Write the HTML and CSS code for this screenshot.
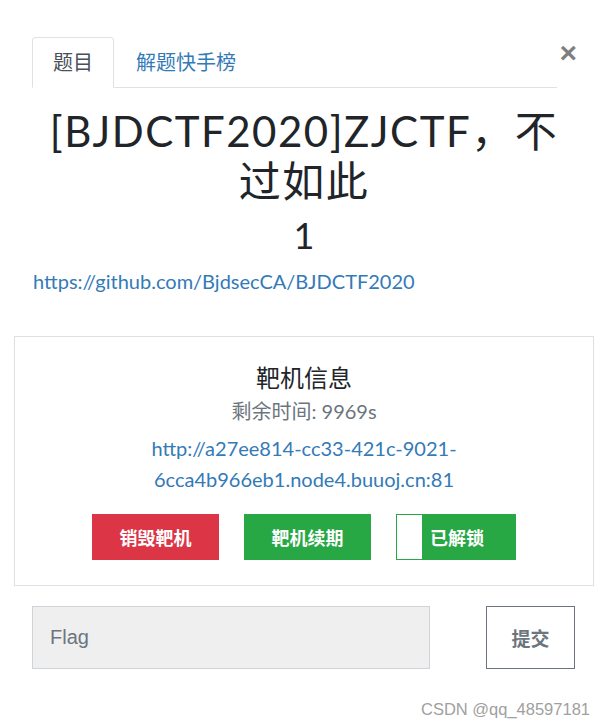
FILE: index.html
```html
<!DOCTYPE html>
<html lang="zh">
<head>
<meta charset="utf-8">
<title>题目</title>
<link rel="stylesheet" href="styles.css">
</head>
<body>
<div class="modal">
  <div class="tabs-row">
    <ul class="tabs">
      <li class="tab active">题目</li>
      <li class="tab">解题快手榜</li>
    </ul>
    <button class="close" type="button">×</button>
  </div>

  <div class="challenge">
    <h1 class="title">[BJDCTF2020]ZJCTF，不过如此</h1>
    <h2 class="value">1</h2>
    <p class="desc"><a href="#">https://github.com/BjdsecCA/BJDCTF2020</a></p>
  </div>

  <div class="card">
    <h3 class="card-title">靶机信息</h3>
    <p class="remain">剩余时间: 9969s</p>
    <p class="target"><a href="#">http://a27ee814-cc33-421c-9021-6cca4b966eb1.node4.buuoj.cn:81</a></p>
    <div class="actions">
      <button class="btn btn-red" type="button">销毁靶机</button>
      <button class="btn btn-green" type="button">靶机续期</button>
      <button class="btn btn-toggle" type="button"><span class="knob"></span><span class="toggle-label">已解锁</span></button>
    </div>
  </div>

  <form class="submit-row">
    <input class="flag-input" type="text" placeholder="Flag">
    <button class="submit" type="button">提交</button>
  </form>

  <div class="watermark">CSDN @qq_48597181</div>
</div>
</body>
</html>
```

FILE: styles.css
```css
* { box-sizing: border-box; }

html, body {
  margin: 0;
  padding: 0;
  background: #fff;
}

body {
  font-family: Lato, "Noto Sans CJK SC", sans-serif;
  color: #212529;
  width: 604px;
  height: 727px;
  overflow: hidden;
}

.modal {
  padding-top: 37px;
}

.tabs-row {
  display: flex;
  align-items: flex-start;
  padding-left: 32px;
  padding-right: 27px;
}

.tabs {
  flex: 1;
  display: flex;
  list-style: none;
  margin: 0;
  padding: 0;
  border-bottom: 1px solid #dee2e6;
}

.tab {
  font-size: 20px;
  line-height: 24px;
  padding: 12px 20px 13px;
  border: 1px solid transparent;
  border-radius: 4px 4px 0 0;
  margin-bottom: -1px;
  color: #337ab7;
  margin-right: 1px;
}

.tab.active {
  color: #495057;
  border-color: #dee2e6 #dee2e6 #fff;
  background: #fff;
}

.close {
  width: 20px;
  margin-left: 0;
  margin-top: 0;
  padding: 0;
  border: 0;
  background: none;
  font-family: "Liberation Sans", Arial, sans-serif;
  font-size: 30px;
  line-height: 32px;
  font-weight: 700;
  color: #000;
  opacity: 0.5;
  text-align: right;
}

.challenge {
  padding: 0 40px 0 44px;
  text-align: center;
}

.title {
  margin: 18px 0 0;
  font-size: 42px;
  font-weight: 400;
  line-height: 1.2;
  letter-spacing: 1.5px;
  color: #212529;
}

.value {
  margin: 7px 0 0;
  font-size: 36px;
  font-weight: 400;
  line-height: 1.2;
}

.desc {
  margin: 9px 0 0;
  text-align: left;
  padding-left: 0;
  margin-left: -11px;
  font-size: 20px;
  line-height: 30px;
}

a {
  color: #337ab7;
  text-decoration: none;
}

.card {
  margin: 40px 10px 0 14px;
  border: 1px solid #dfdfdf;
  padding: 27px 20px 25px;
  text-align: center;
}

.card-title {
  margin: 0;
  font-size: 24px;
  font-weight: 400;
  line-height: 1.2;
  color: #212529;
}

.remain {
  margin: 3px 0 0;
  font-size: 20px;
  line-height: 30px;
  color: #6c757d;
}

.target {
  margin: 7px 0 0;
  font-size: 20px;
  line-height: 31px;
}

.actions {
  display: flex;
  justify-content: center;
  gap: 25px;
  margin-top: 19px;
}

.btn {
  height: 46px;
  border: 0;
  padding: 0;
  font-family: Lato, "Noto Sans CJK SC", sans-serif;
  font-size: 18px;
  font-weight: 700;
  color: #fff;
  cursor: pointer;
}

.btn-red {
  width: 127px;
  background: #dc3545;
}

.btn-green {
  width: 127px;
  background: #28a745;
}

.btn-toggle {
  width: 120px;
  display: flex;
  align-items: stretch;
  background: #28a745;
  border: 1px solid #28a745;
}

.knob {
  width: 25px;
  background: #fff;
}

.toggle-label {
  flex: 1;
  display: flex;
  align-items: center;
  justify-content: flex-start;
  padding-left: 8px;
}

.submit-row {
  display: flex;
  margin: 20px 29px 0 32px;
  gap: 56px;
}

.flag-input {
  width: 398px;
  height: 63px;
  border: 1px solid #ced4da;
  background: #efefef;
  padding: 0 17px;
  font-family: "Liberation Sans", Arial, sans-serif;
  font-size: 20px;
  color: #495057;
  outline: none;
}

.flag-input::placeholder {
  color: #6c757d;
}

.submit {
  width: 89px;
  height: 63px;
  border: 1px solid #6c757d;
  background: #fff;
  font-family: Lato, "Noto Sans CJK SC", sans-serif;
  font-size: 19px;
  font-weight: 700;
  color: #6c757d;
}

.watermark {
  margin-top: 31px;
  padding-right: 14px;
  text-align: right;
  font-family: "Liberation Sans", Arial, sans-serif;
  font-size: 16.5px;
  color: #a0a0a0;
}
```
